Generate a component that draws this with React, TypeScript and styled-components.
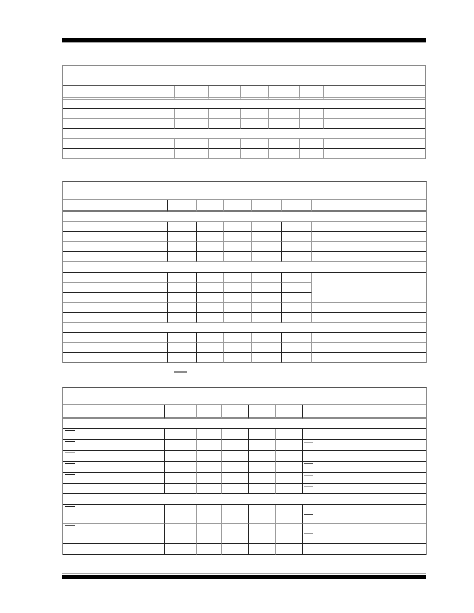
import React from 'react';
import styled, { createGlobalStyle } from 'styled-components';

const D = '#222';
const G = '#9c9c9c';

type Mark = { col: number; top: number; tone: string; left?: number; w?: number };

interface Row {
  kind: 'title' | 'head' | 'section' | 'row';
  h: number;
  line: string;
  bw?: number;
  bs?: string;
  span?: number;
  short?: boolean;
  marks?: Mark[];
}

interface Spec {
  cols: number[];
  head: string[];
  body: string[];
  top: string;
  rows: Row[];
}

const GlobalStyle = createGlobalStyle`
  html, body {
    margin: 0;
    padding: 0;
    background: #fff;
    font-family: "Liberation Sans", Arial, sans-serif;
  }
`;

const Page = styled.div`
  width: 474px;
  min-height: 613px;
  box-sizing: border-box;
  padding: 38px 0 0 62px;
  display: flex;
  flex-direction: column;
`;

const TopRule = styled.div`
  width: 364px;
  height: 4px;
  background: #000;
  border-bottom: 1px solid #a8a8a8;
`;

const BottomRule = styled.div`
  width: 364px;
  height: 4px;
  margin-top: 18px;
  background: #000;
  border-top: 1px solid #a8a8a8;
  background-clip: content-box;
  padding-top: 1px;
`;

const Table = styled.div<{ $cols: number[]; $top: string; $gap: number }>`
  margin-top: ${p => p.$gap}px;
  display: grid;
  grid-template-columns: ${p => p.$cols.map(c => c + 'px').join(' ')};
  width: max-content;
  border: 1px solid #8a8a8a;
  border-top-color: ${p => p.$top};
  border-bottom: none;
`;

const Cell = styled.div<{ $h?: number; $b: string; $bw: number; $bs: string; $r?: string; $span?: number }>`
  box-sizing: border-box;
  height: ${p => (p.$h ? p.$h + 'px' : 'auto')};
  border-bottom: ${p => `${p.$bw}px ${p.$bs} ${p.$b}`};
  border-right: ${p => (p.$r ? `1px solid ${p.$r}` : 'none')};
  ${p => (p.$span ? `grid-row: span ${p.$span};` : '')}
  overflow: hidden;
`;

const Band = styled(Cell)`
  grid-column: 1 / -1;
  border-right: none;
`;

const Bar = styled.span<{ $top: number; $tone: string; $left: number; $w: number }>`
  display: block;
  width: ${p => p.$w}px;
  height: 1px;
  margin: ${p => p.$top}px 0 0 ${p => p.$left}px;
  background: ${p => p.$tone};
`;

const Note = styled.div`
  margin: 8px 0 0 112px;
  width: 13px;
  height: 2px;
  background: #8c8c8c;
`;

const renderRow = (spec: Spec, row: Row, ri: number) => {
  const bw = row.bw ?? 1;
  const bs = row.bs ?? 'solid';
  if (row.kind === 'title' || row.kind === 'section') {
    return <Band key={ri} $h={row.h} $b={row.line} $bw={bw} $bs={bs} />;
  }
  const verts = row.kind === 'head' ? spec.head : spec.body;
  const count = row.short ? spec.cols.length - 1 : spec.cols.length;
  const cells = [];
  for (let ci = 0; ci < count; ci++) {
    const last = ci === spec.cols.length - 1;
    const spanning = last && row.span;
    const marks = (row.marks || []).filter(m => m.col === ci);
    cells.push(
      <Cell
        key={`${ri}-${ci}`}
        $h={spanning ? undefined : row.h}
        $span={spanning ? row.span : undefined}
        $b={row.line}
        $bw={bw}
        $bs={bs}
        $r={last ? undefined : verts[ci]}
      >
        {marks.map((m, mi) => (
          <Bar key={mi} $top={m.top} $tone={m.tone} $left={m.left ?? 2} $w={m.w ?? 10} />
        ))}
      </Cell>
    );
  }
  return cells;
};

const Sheet: React.FC<{ spec: Spec; gap: number }> = ({ spec, gap }) => (
  <Table $cols={spec.cols} $top={spec.top} $gap={gap}>
    {spec.rows.map((r, i) => renderRow(spec, r, i))}
  </Table>
);

const first: Spec = {
  cols: [112, 34, 32, 28, 31, 24, 101],
  head: [G, G, G, G, G, G],
  body: [G, G, G, G, G, G],
  top: '#8a8a8a',
  rows: [
    { kind: 'title', h: 20, line: '#555' },
    { kind: 'head', h: 14, line: '#a0a0a0', bw: 3, bs: 'double' },
    { kind: 'section', h: 9, line: D },
    { kind: 'row', h: 10, line: G },
    { kind: 'row', h: 10, line: D },
    { kind: 'section', h: 10, line: G },
    { kind: 'row', h: 10, line: D },
    { kind: 'row', h: 10, line: G },
  ],
};

const second: Spec = {
  cols: [105, 29, 27, 28, 30, 30, 114],
  head: [D, G, G, G, G, G],
  body: [D, D, G, G, D, G],
  top: '#555',
  rows: [
    { kind: 'title', h: 18, line: G },
    { kind: 'head', h: 12, line: '#777', bw: 2 },
    { kind: 'section', h: 10, line: G },
    { kind: 'row', h: 10, line: D },
    { kind: 'row', h: 10, line: G },
    { kind: 'row', h: 10, line: D },
    { kind: 'row', h: 10, line: G },
    { kind: 'section', h: 11, line: D },
    { kind: 'row', h: 10, line: G, span: 3 },
    { kind: 'row', h: 10, line: D, short: true },
    { kind: 'row', h: 10, line: G, short: true },
    { kind: 'row', h: 10, line: D },
    { kind: 'row', h: 10, line: G },
    { kind: 'section', h: 10, line: D },
    { kind: 'row', h: 10, line: G },
    { kind: 'row', h: 10, line: D },
    { kind: 'row', h: 10, line: '#777' },
  ],
};

const third: Spec = {
  cols: [102, 32, 25, 27, 27, 27, 123],
  head: [D, G, G, D, G, D],
  body: [D, G, G, D, G, D],
  top: '#555',
  rows: [
    { kind: 'title', h: 17, line: G },
    { kind: 'head', h: 14, line: '#8a8a8a', bw: 2 },
    { kind: 'section', h: 10, line: D },
    { kind: 'row', h: 11, line: D, marks: [{ col: 0, top: 1, tone: D }] },
    {
      kind: 'row', h: 11, line: D,
      marks: [{ col: 0, top: 1, tone: D }, { col: 6, top: 2, tone: '#aaa', left: 1, w: 9 }],
    },
    { kind: 'row', h: 11, line: D, marks: [{ col: 0, top: 1, tone: '#aaa' }] },
    {
      kind: 'row', h: 11, line: D,
      marks: [{ col: 0, top: 1, tone: D }, { col: 6, top: 1, tone: '#555', left: 1, w: 9 }],
    },
    {
      kind: 'row', h: 11, line: D,
      marks: [{ col: 0, top: 1, tone: D }, { col: 6, top: 2, tone: '#aaa', left: 1, w: 9 }],
    },
    { kind: 'row', h: 10, line: D, marks: [{ col: 6, top: 2, tone: '#aaa', left: 1, w: 9 }] },
    { kind: 'section', h: 11, line: D },
    {
      kind: 'row', h: 19, line: G,
      marks: [{ col: 0, top: 1, tone: D }, { col: 6, top: 9, tone: '#444', left: 1, w: 9 }],
    },
    {
      kind: 'row', h: 20, line: D,
      marks: [{ col: 0, top: 1, tone: '#555' }, { col: 6, top: 9, tone: '#999', left: 1, w: 9 }],
    },
    { kind: 'row', h: 11, line: D },
  ],
};

const App: React.FC = () => (
  <>
    <GlobalStyle />
    <Page>
      <TopRule />
      <Sheet spec={first} gap={22} />
      <Sheet spec={second} gap={22} />
      <Note />
      <Sheet spec={third} gap={14} />
      <BottomRule />
    </Page>
  </>
);

export default App;
